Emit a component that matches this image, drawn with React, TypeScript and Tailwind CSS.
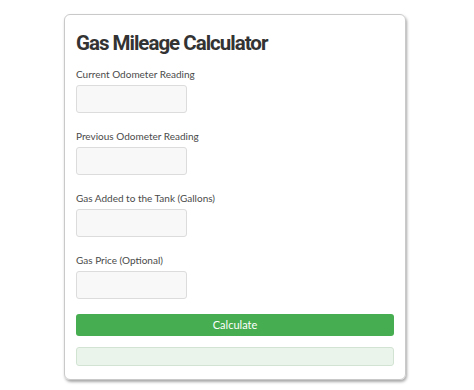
import React from "react";

const fields = [
  "Current Odometer Reading",
  "Previous Odometer Reading",
  "Gas Added to the Tank (Gallons)",
  "Gas Price (Optional)",
];

export default function App() {
  return (
    <div className="w-[474px] h-[390px] bg-white pt-[14px] pl-[64px]" style={{ fontFamily: 'Lato, "Open Sans", sans-serif' }}>
      <div className="w-[342px] h-[366px] rounded-[6px] border border-[#c9c9c9] shadow-[1px_2px_3px_rgba(0,0,0,0.35)] px-[11px] pt-[14px]">
        <h1 className="text-[20.5px] font-bold text-[#333] leading-[28px] tracking-[-1px]" style={{ fontFamily: 'Roboto, sans-serif' }}>
          Gas Mileage Calculator
        </h1>
        <div className="mt-[10px] flex flex-col gap-[16px]">
          {fields.map((f) => (
            <div key={f} className="flex flex-col">
              <label className="text-[10px] leading-[14px] text-[#4a4a4a]">{f}</label>
              <div className="mt-[4px] w-[111px] h-[28px] rounded-[3px] border border-[#dcdcdc] bg-[#f8f8f8]" />
            </div>
          ))}
        </div>
        <button className="mt-[15px] w-full h-[22px] rounded-[3px] bg-[#46ad50] text-white text-[11px] leading-[22px]">
          Calculate
        </button>
        <div className="mt-[11px] w-full h-[19px] rounded-[3px] border border-[#d3e3d3] bg-[#ebf4eb]" />
      </div>
    </div>
  );
}
